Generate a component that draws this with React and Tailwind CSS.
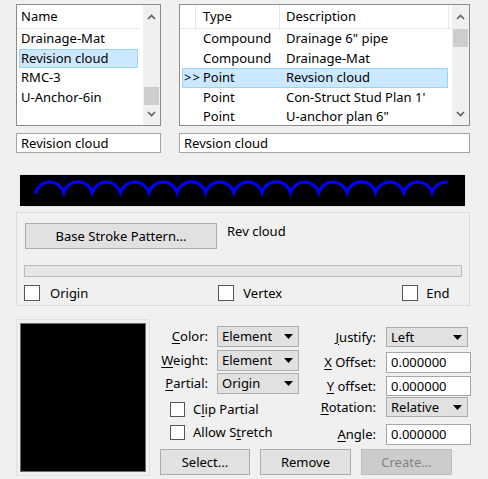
const cloudPath = (() => {
  const w = 28.33;
  const x0 = 16.5;
  const yb = 18.5;
  const r = 14.8;
  let d = `M${x0} ${yb}`;
  for (let i = 0; i < 14; i++) {
    d += ` A${r} ${r} 0 0 1 ${(x0 + (i + 1) * w).toFixed(1)} ${yb}`;
  }
  d += ` A${r} ${r} 0 0 1 ${(x0 + 14.5 * w).toFixed(1)} 8`;
  return d;
})();

const Chevron = ({ up }) => (
  <svg width="9" height="6" viewBox="0 0 9 6">
    <polyline
      points={up ? "1,5 4.5,1.5 8,5" : "1,1 4.5,4.5 8,1"}
      fill="none"
      stroke="#606060"
      strokeWidth="1.6"
    />
  </svg>
);

const ScrollBar = ({ thumbTop }) => (
  <div className="w-[17px] h-full bg-[#f0f0f0] relative flex flex-col items-center">
    <div className="h-[24px] flex items-center justify-center w-full">
      <Chevron up />
    </div>
    <div className="flex-1" />
    <div className="h-[22px] flex items-center justify-center w-full">
      <Chevron />
    </div>
    <div
      className="absolute left-[1px] w-[15px] h-[18px] bg-[#cdcdcd]"
      style={{ top: thumbTop }}
    />
  </div>
);

const Triangle = () => (
  <svg width="9" height="5" viewBox="0 0 9 5">
    <polygon points="0,0 9,0 4.5,5" fill="#000" />
  </svg>
);

const Combo = ({ value, w = "w-[82px]", h = "h-[21px]" }) => (
  <div
    className={`${w} ${h} bg-[#e1e1e1] border border-[#adadad] flex items-center justify-between pl-[4px] pr-[5px]`}
  >
    <span>{value}</span>
    <Triangle />
  </div>
);

const Field = ({ value, h = "h-[21px]" }) => (
  <div className={`w-[85px] ${h} bg-white border border-[#a5a5a5] flex items-center pl-[4px]`}>
    {value}
  </div>
);

const Check = ({ size = "w-[16px] h-[16px]" }) => (
  <div className={`${size} bg-white border border-[#555555] shrink-0`} />
);

const Btn = ({ children, w, disabled }) => (
  <div
    className={`${w} h-[26px] flex items-center justify-center border ${
      disabled
        ? "bg-[#cccccc] border-[#bfbfbf] text-[#838383]"
        : "bg-[#e1e1e1] border-[#adadad]"
    }`}
  >
    {children}
  </div>
);

const nameRows = ["Drainage-Mat", "Revision cloud", "RMC-3", "U-Anchor-6in"];

const typeRows = [
  { mark: "", type: "Compound", desc: 'Drainage 6" pipe' },
  { mark: "", type: "Compound", desc: "Drainage-Mat" },
  { mark: ">>", type: "Point", desc: "Revsion cloud" },
  { mark: "", type: "Point", desc: "Con-Struct Stud Plan 1'" },
  { mark: "", type: "Point", desc: 'U-anchor plan 6"' },
];

export default function App() {
  return (
    <div className="w-[488px] h-[479px] bg-[#f0f0f0] overflow-hidden text-[13px] leading-none text-black font-['Noto_Sans',sans-serif] flex flex-col">
      {/* Lists */}
      <div className="flex pt-[4px] pl-[16px]">
        <div className="w-[145px] flex flex-col">
          <div className="h-[122px] border border-[#8c8c8c] bg-white flex overflow-hidden">
            <div className="flex-1 flex flex-col">
              <div className="h-[24px] shrink-0 border-b border-[#e5e5e5] flex items-center pl-[4px] mr-[3px]">
                Name
              </div>
              {nameRows.map((n, i) => (
                <div
                  key={n}
                  className={`h-[19.5px] shrink-0 flex items-center ml-[2px] mr-[5px] pl-[1px] border ${
                    i === 1 ? "bg-[#cce8ff] border-[#99d1ff]" : "border-transparent"
                  }`}
                >
                  {n}
                </div>
              ))}
            </div>
            <ScrollBar thumbTop={82} />
          </div>
          <div className="mt-[7px] h-[20px] bg-white border border-[#a5a5a5] flex items-center pl-[4px]">
            Revision cloud
          </div>
        </div>

        <div className="ml-[18px] w-[291px] flex flex-col">
          <div className="h-[122px] border border-[#8c8c8c] bg-white flex overflow-hidden">
            <div className="flex-1 flex flex-col">
              <div className="h-[24px] shrink-0 border-b border-[#e5e5e5] flex">
                <div className="w-[16px] border-r border-[#e5e5e5]" />
                <div className="w-[84px] border-r border-[#e5e5e5] flex items-center pl-[7px]">
                  Type
                </div>
                <div className="w-[169px] border-r border-[#e5e5e5] flex items-center pl-[6px]">
                  Description
                </div>
              </div>
              {typeRows.map((r, i) => (
                <div
                  key={i}
                  className={`h-[19.5px] shrink-0 flex items-center ml-[2px] mr-[4px] border ${
                    i === 2 ? "bg-[#cce8ff] border-[#99d1ff]" : "border-transparent"
                  }`}
                >
                  <div className="w-[13px] pl-[1px] tracking-[1px]">{r.mark}</div>
                  <div className="w-[84px] pl-[7px]">{r.type}</div>
                  <div className="pl-[6px] whitespace-nowrap">{r.desc}</div>
                </div>
              ))}
            </div>
            <ScrollBar thumbTop={24} />
          </div>
          <div className="mt-[7px] h-[20px] bg-white border border-[#a5a5a5] flex items-center pl-[4px]">
            Revsion cloud
          </div>
        </div>
      </div>

      {/* Pattern preview */}
      <div className="mt-[21px] ml-[19px] w-[447px] h-[33px] bg-black border border-[#e6e6e6]">
        <svg width="445" height="31" viewBox="1 1 445 31">
          <path d={cloudPath} fill="none" stroke="#0000ff" strokeWidth="3" strokeLinecap="round" />
        </svg>
      </div>

      {/* Stroke group */}
      <div className="mt-[5px] ml-[16px] w-[454px] h-[94px] border border-[#dcdcdc] flex flex-col">
        <div className="flex items-start pt-[10px] pl-[8px]">
          <Btn w="w-[192px]">Base Stroke Pattern...</Btn>
          <span className="ml-[10px] mt-[2px]">Rev cloud</span>
        </div>
        <div className="mt-[16px] ml-[7px] w-[438px] h-[12px] bg-[#e6e6e6] border border-[#bcbcbc]" />
        <div className="mt-[8px] ml-[7px] flex items-center">
          <Check />
          <span className="ml-[10px]">Origin</span>
          <div className="ml-[130px] flex items-center">
            <Check />
            <span className="ml-[9px]">Vertex</span>
          </div>
          <div className="ml-[120px] flex items-center">
            <Check />
            <span className="ml-[8px]">End</span>
          </div>
        </div>
      </div>

      {/* Bottom */}
      <div className="mt-[13px] ml-[16px] flex">
        <div className="w-[134px] h-[157px] border border-[#e0e0e0] p-[3px]">
          <div className="w-full h-full bg-black border border-[#6d6d6d]" />
        </div>

        <div className="flex flex-col">
          <div className="h-[130px] flex">
            <div className="w-[150px] flex flex-col">
              <div className="mt-[7px] flex items-center">
                <div className="w-[58px] text-right">
                  <span className="underline underline-offset-2">C</span>olor:
                </div>
                <div className="ml-[9px]">
                  <Combo value="Element" />
                </div>
              </div>
              <div className="mt-[3px] flex items-center">
                <div className="w-[58px] text-right">
                  <span className="underline underline-offset-2">W</span>eight:
                </div>
                <div className="ml-[9px]">
                  <Combo value="Element" />
                </div>
              </div>
              <div className="mt-[2px] flex items-center">
                <div className="w-[58px] text-right">
                  <span className="underline underline-offset-2">P</span>artial:
                </div>
                <div className="ml-[9px]">
                  <Combo value="Origin" />
                </div>
              </div>
              <div className="mt-[8px] ml-[20px] flex items-center">
                <Check size="w-[15px] h-[15px]" />
                <span className="ml-[8px]">
                  C<span className="underline underline-offset-2">l</span>ip Partial
                </span>
              </div>
              <div className="mt-[8px] ml-[20px] flex items-center">
                <Check size="w-[15px] h-[15px]" />
                <span className="ml-[8px]">
                  Allow S<span className="underline underline-offset-2">t</span>retch
                </span>
              </div>
            </div>

            <div className="flex flex-col">
              <div className="mt-[8px] flex items-center">
                <div className="w-[77px] text-right pr-[1px]">
                  <span className="underline underline-offset-2">J</span>ustify:
                </div>
                <div className="ml-[9px]">
                  <Combo value="Left" h="h-[20px]" />
                </div>
              </div>
              <div className="mt-[5px] flex items-center">
                <div className="w-[77px] text-right pr-[1px]">
                  <span className="underline underline-offset-2">X</span> Offset:
                </div>
                <div className="ml-[9px]">
                  <Field value="0.000000" />
                </div>
              </div>
              <div className="mt-[3px] flex items-center">
                <div className="w-[77px] text-right pr-[1px]">
                  <span className="underline underline-offset-2">Y</span> offset:
                </div>
                <div className="ml-[9px]">
                  <Field value="0.000000" h="h-[20px]" />
                </div>
              </div>
              <div className="mt-[1px] flex items-center">
                <div className="w-[77px] text-right pr-[1px]">
                  <span className="underline underline-offset-2">R</span>otation:
                </div>
                <div className="ml-[9px]">
                  <Combo value="Relative" h="h-[20px]" />
                </div>
              </div>
              <div className="mt-[7px] flex items-center">
                <div className="w-[77px] text-right pr-[1px]">
                  <span className="underline underline-offset-2">A</span>ngle:
                </div>
                <div className="ml-[9px]">
                  <Field value="0.000000" />
                </div>
              </div>
            </div>
          </div>

          <div className="ml-[10px] flex gap-[10px]">
            <Btn w="w-[90px]">Select...</Btn>
            <Btn w="w-[91px]">Remove</Btn>
            <Btn w="w-[91px]" disabled>
              Create...
            </Btn>
          </div>
        </div>
      </div>
    </div>
  );
}
